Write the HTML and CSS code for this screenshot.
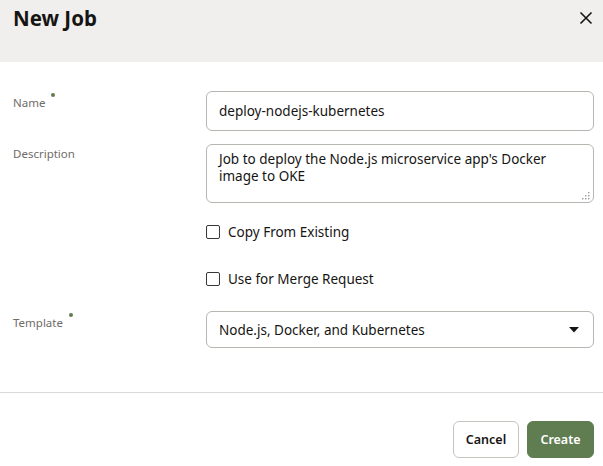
FILE: index.html
```html
<!DOCTYPE html>
<html lang="en">
<head>
<meta charset="utf-8">
<title>New Job</title>
<link rel="stylesheet" href="styles.css">
</head>
<body>
<div class="dialog">
  <header class="hdr">
    <h1 class="title">New Job</h1>
    <button class="close" aria-label="Close">
      <svg width="14" height="14" viewBox="0 0 14 14"><path d="M1.5 1.5 L12.5 12.5 M12.5 1.5 L1.5 12.5" stroke="#161513" stroke-width="1.6" fill="none"/></svg>
    </button>
  </header>
  <div class="body">
    <div class="row row-name">
      <label class="lbl">Name<span class="req"></span></label>
      <div class="ctl"><input class="field" type="text" value="deploy-nodejs-kubernetes"></div>
    </div>
    <div class="row row-desc">
      <label class="lbl">Description</label>
      <div class="ctl ta-wrap">
        <textarea class="field area">Job to deploy the Node.js microservice app's Docker image to OKE</textarea>
        <svg class="grip" width="8" height="8" viewBox="0 0 8 8"><g fill="#9a9a9a"><rect x="6" y="0" width="1.4" height="1.4"/><rect x="3" y="3" width="1.4" height="1.4"/><rect x="6" y="3" width="1.4" height="1.4"/><rect x="0" y="6" width="1.4" height="1.4"/><rect x="3" y="6" width="1.4" height="1.4"/><rect x="6" y="6" width="1.4" height="1.4"/></g></svg>
      </div>
    </div>
    <div class="row row-check first">
      <span></span>
      <label class="check"><span class="box"></span>Copy From Existing</label>
    </div>
    <div class="row row-check second">
      <span></span>
      <label class="check"><span class="box"></span>Use for Merge Request</label>
    </div>
    <div class="row row-tpl">
      <label class="lbl">Template<span class="req"></span></label>
      <div class="ctl">
        <div class="select">
          <span>Node.js, Docker, and Kubernetes</span>
          <svg width="10" height="6" viewBox="0 0 10 6"><path d="M0 0 L10 0 L5 5.5 Z" fill="#161513"/></svg>
        </div>
      </div>
    </div>
  </div>
  <footer class="ftr">
    <button class="btn cancel">Cancel</button>
    <button class="btn create">Create</button>
  </footer>
</div>
</body>
</html>
```

FILE: styles.css
```css
* { box-sizing: border-box; }
html, body { margin: 0; padding: 0; background: #fff; }
body {
  font-family: "Noto Sans", "Open Sans", sans-serif;
  color: #161513;
  width: 603px;
  height: 466px;
  overflow: hidden;
}
.dialog { display: flex; flex-direction: column; }
.hdr {
  background: #f1efed;
  height: 62px;
  display: flex;
  justify-content: space-between;
  align-items: flex-start;
  padding: 0 10px 0 13px;
}
.title {
  margin: 0;
  padding-top: 5px;
  font-size: 20.5px;
  font-weight: 700;
  line-height: 27px;
}
.close {
  border: 0;
  background: transparent;
  padding: 0;
  margin-top: 11px;
  width: 14px;
  height: 14px;
  display: flex;
}
.body {
  padding: 29px 9px 44px 13px;
  display: flex;
  flex-direction: column;
}
.row {
  display: grid;
  grid-template-columns: 193px 1fr;
}
.row-desc { margin-top: 13px; }
.row-check { height: 34px; align-items: center; }
.row-check.first { margin-top: 12px; }
.row-check.second { margin-top: 13px; }
.row-tpl { margin-top: 15px; }
.lbl {
  font-size: 11.5px;
  color: #6f6c69;
  line-height: 16px;
  padding-top: 2px;
  position: relative;
}
.req {
  display: inline-block;
  width: 4px;
  height: 4px;
  border-radius: 50%;
  background: #5f7d50;
  margin-left: 6px;
  vertical-align: 10px;
}
.ctl { position: relative; }
.field {
  display: block;
  width: 100%;
  height: 40px;
  border: 1px solid #b9b6b2;
  border-radius: 6px;
  padding: 0 12px;
  font-family: inherit;
  font-size: 13.5px;
  color: #161513;
  background: #fff;
  outline: none;
}
.area {
  height: 59px;
  padding: 6px 12px;
  line-height: 17px;
  resize: none;
  overflow: hidden;
}
.grip { position: absolute; right: 4px; bottom: 3px; }
.check {
  display: flex;
  align-items: center;
  font-size: 13.5px;
  color: #161513;
}
.box {
  width: 14px;
  height: 14px;
  border: 1.5px solid #3a3734;
  border-radius: 2px;
  margin-right: 8px;
  background: #fff;
}
.select {
  height: 37px;
  border: 1px solid #b9b6b2;
  border-radius: 6px;
  padding: 0 14px 0 12px;
  display: flex;
  justify-content: space-between;
  align-items: center;
  font-size: 13.5px;
}
.ftr {
  border-top: 1px solid #dcdad7;
  padding: 28px 9px 0 13px;
  display: flex;
  justify-content: flex-end;
  gap: 8px;
}
.btn {
  height: 37px;
  width: 66px;
  border-radius: 6px;
  font-family: inherit;
  font-size: 12.5px;
  font-weight: 600;
  padding: 0;
}
.cancel { background: #fff; border: 1px solid #c7c4c0; color: #161513; }
.create { background: #5f7d50; border: 1px solid #5f7d50; color: #fff; width: 67px; }
```
